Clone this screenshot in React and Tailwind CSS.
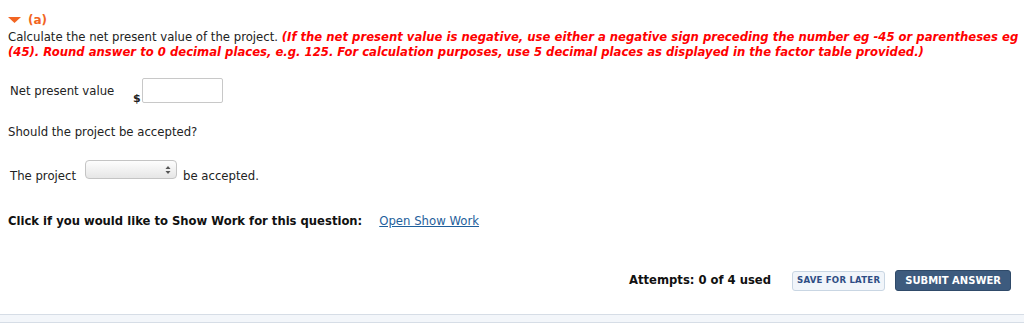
export default function App() {
  return (
    <div className="w-[1024px] h-[328px] bg-white overflow-hidden text-[11.7px] text-[#222] font-['DejaVu_Sans',Verdana,sans-serif]">
      <div className="pl-[8px] pr-[4px]">
        <div className="flex items-center gap-[7px] pt-[12px] h-[27px]">
          <svg width="13" height="6" viewBox="0 0 13 6" className="mt-[1px]">
            <polygon points="0,0 13,0 6.5,6" fill="#f26522" />
          </svg>
          <span className="font-bold text-[#f26522] text-[12px]">(a)</span>
        </div>
        <p className="leading-[15px] mt-[3px] whitespace-nowrap">
          Calculate the net present value of the project.{' '}
          <span className="font-bold italic text-[#ff0000] text-[11.65px]">
            (If the net present value is negative, use either a negative sign preceding the number eg -45 or parentheses eg<br />
            (45). Round answer to 0 decimal places, e.g. 125. For calculation purposes, use 5 decimal places as displayed in the factor table provided.)
          </span>
        </p>

        <div className="flex items-start mt-[18px] pl-[2px]">
          <span className="mt-[5px] w-[123px]">Net present value</span>
          <span className="font-bold text-[11px] mt-[13px] mr-[1px]">$</span>
          <input className="w-[81px] h-[25px] border border-[#c8c8c8] rounded-[2px] bg-white" />
        </div>

        <p className="mt-[16px]">Should the project be accepted?</p>

        <div className="flex items-start mt-[19px] pl-[2px]">
          <span className="w-[75px] mt-[8px]">The project</span>
          <div className="w-[92px] h-[19px] rounded-[4px] border border-[#c4c4c4] bg-gradient-to-b from-[#fdfdfd] to-[#e6e6e6] flex items-center justify-end pr-[5px]">
            <svg width="6" height="10" viewBox="0 0 6 10">
              <polygon points="3,1 5.5,4 0.5,4" fill="#555" />
              <polygon points="3,9 5.5,6 0.5,6" fill="#555" />
            </svg>
          </div>
          <span className="ml-[6px] mt-[8px]">be accepted.</span>
        </div>

        <div className="flex items-center mt-[27px]">
          <span className="font-bold text-[#111] text-[11.6px]">Click if you would like to Show Work for this question:</span>
          <a href="#" className="ml-[17px] text-[#1f5f9c] underline">Open Show Work</a>
        </div>

        <div className="flex items-center justify-end mt-[40px] pr-[9px]">
          <span className="font-bold text-[#111] text-[11.6px] mr-[21px]">Attempts: 0 of 4 used</span>
          <button className="h-[20px] px-[4px] border border-[#c9d6e3] rounded-[3px] bg-[#f1f5fa] text-[#2e4d85] text-[8.6px] font-bold tracking-[0.2px] mr-[10px]">
            SAVE FOR LATER
          </button>
          <button className="h-[21px] px-[9px] rounded-[3px] bg-[#3d5b7e] text-white text-[10px] font-bold border border-[#2f4a69]">
            SUBMIT ANSWER
          </button>
        </div>
      </div>
      <div className="mt-[23px] h-[9px] border-t border-b border-[#d6dde6] bg-[#f3f6fa]" />
    </div>
  )
}
